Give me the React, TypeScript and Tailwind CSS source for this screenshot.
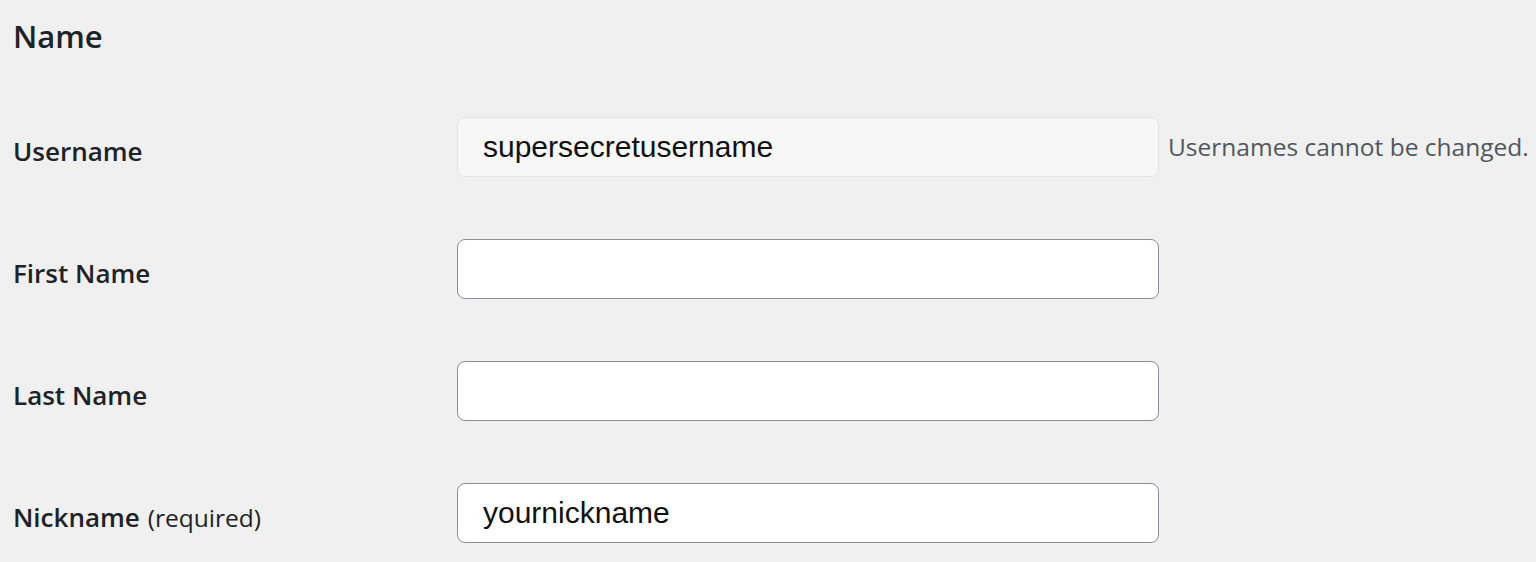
const FONT = "font-['Open_Sans','Noto_Sans',sans-serif]";

type Row = {
  label: string;
  hint?: string;
  value?: string;
  disabled?: boolean;
};

const ROWS: Row[] = [
  { label: 'Username', value: 'supersecretusername', disabled: true },
  { label: 'First Name' },
  { label: 'Last Name' },
  { label: 'Nickname', hint: '(required)', value: 'yournickname' },
];

const Field = ({ row }: { row: Row }) => (
  <div className="flex items-center">
    <label
      className={`${FONT} w-[444px] shrink-0 pt-[8px] text-[26px] font-semibold text-[#1d2327]`}
    >
      {row.label}
      {row.hint && <span className="ml-[8px] text-[24.5px] font-normal">{row.hint}</span>}
    </label>
    <input
      type="text"
      readOnly
      disabled={row.disabled}
      defaultValue={row.value ?? ''}
      className={
        row.disabled
          ? "h-[60px] w-[702px] rounded-[8px] border border-[#e3e3e3] bg-[#f7f7f7] pl-[25px] font-['Liberation_Sans',Arial,sans-serif] text-[30px] text-[#111] outline-none"
          : "h-[60px] w-[702px] rounded-[8px] border border-[#8c8f94] bg-white pl-[25px] font-['Liberation_Sans',Arial,sans-serif] text-[30px] text-[#111] outline-none"
      }
    />
    {row.disabled && (
      <span className={`${FONT} ml-[9px] text-[24.5px] text-[#50575e]`}>
        Usernames cannot be changed.
      </span>
    )}
  </div>
);

export default function App() {
  return (
    <div className="h-[562px] w-[1536px] overflow-hidden bg-[#f0f0f1] pl-[13px]">
      <h2 className={`${FONT} pt-[14px] text-[31px] font-semibold leading-[44px] text-[#1d2327]`}>
        Name
      </h2>
      <div className="mt-[59px] flex flex-col gap-[62px]">
        {ROWS.map((row) => (
          <Field key={row.label} row={row} />
        ))}
      </div>
    </div>
  );
}
